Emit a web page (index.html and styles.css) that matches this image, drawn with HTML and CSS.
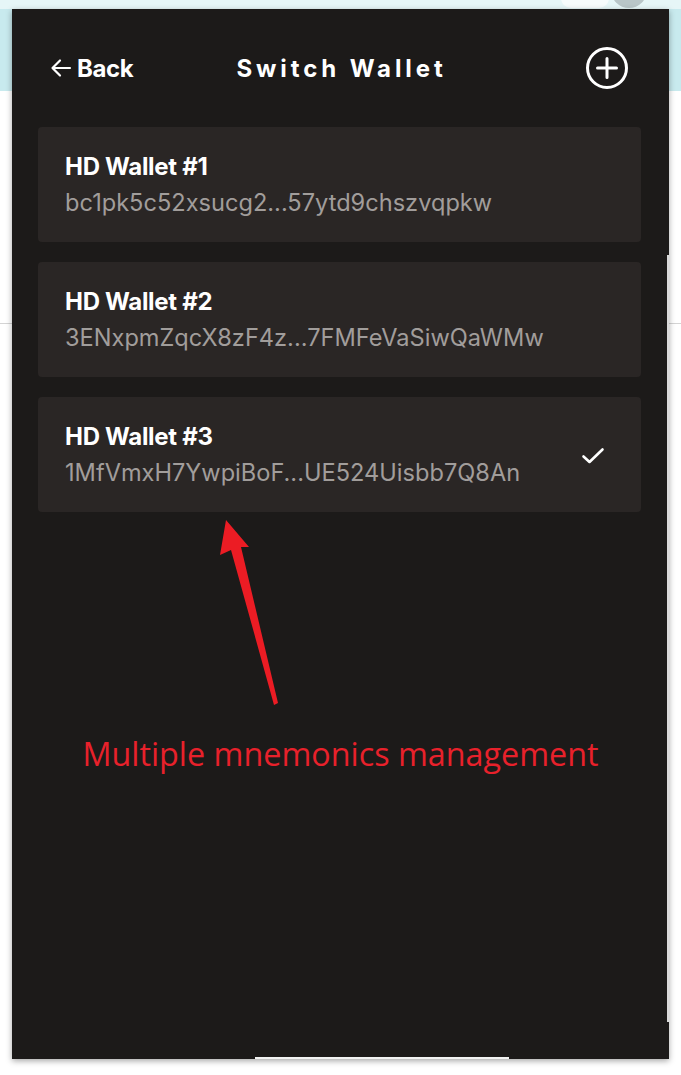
FILE: index.html
```html
<!DOCTYPE html>
<html lang="en">
<head>
<meta charset="utf-8">
<title>Switch Wallet</title>
<link rel="stylesheet" href="styles.css">
</head>
<body>
<div class="topdeco"><span class="pill"></span><span class="dot"></span></div>
<main class="panel">
  <header class="header">
    <a class="back" href="#">
      <svg class="back-icon" viewBox="0 0 22 20" width="22" height="20" aria-hidden="true">
        <path d="M20 10H3M10 2.5L2.5 10L10 17.5" fill="none" stroke="#fff" stroke-width="2.2" stroke-linecap="round" stroke-linejoin="round"/>
      </svg>
      <span>Back</span>
    </a>
    <h1 class="title">Switch Wallet</h1>
    <div class="add">
      <svg viewBox="0 0 44 44" width="44" height="44" aria-hidden="true">
        <circle cx="22" cy="22" r="19.5" fill="none" stroke="#fff" stroke-width="3"/>
        <path d="M22 12.5V31.5M12.5 22H31.5" stroke="#fff" stroke-width="3" stroke-linecap="round"/>
      </svg>
    </div>
  </header>

  <section class="list">
    <div class="card">
      <div class="card-text">
        <div class="name">HD Wallet #1</div>
        <div class="addr">bc1pk5c52xsucg2...57ytd9chszvqpkw</div>
      </div>
    </div>
    <div class="card">
      <div class="card-text">
        <div class="name">HD Wallet #2</div>
        <div class="addr">3ENxpmZqcX8zF4z...7FMFeVaSiwQaWMw</div>
      </div>
    </div>
    <div class="card">
      <div class="card-text">
        <div class="name">HD Wallet #3</div>
        <div class="addr">1MfVmxH7YwpiBoF...UE524Uisbb7Q8An</div>
      </div>
      <svg class="check" viewBox="0 0 24 18" width="24" height="18" aria-hidden="true">
        <path d="M2.5 9.5L8.5 15L21.5 2.5" fill="none" stroke="#fff" stroke-width="2.6" stroke-linecap="round" stroke-linejoin="round"/>
      </svg>
    </div>
  </section>

  <p class="note">Multiple mnemonics management</p>

  <svg class="arrow" viewBox="12 9 657 1050" width="657" height="1050" aria-hidden="true">
    <polygon points="226,520 249,547 241,547 278,703 274,705 231,550 220,555" fill="#ec1c24"/>
  </svg>
  <div class="scrollbar"></div>
</main>
</body>
</html>
```
FILE: styles.css
```css
* { box-sizing: border-box; }

html, body { margin: 0; padding: 0; }

body {
  width: 681px;
  height: 1075px;
  overflow: hidden;
  position: relative;
  padding: 9px 12px 0 12px;
  font-family: Inter, "Liberation Sans", sans-serif;
  background:
    linear-gradient(to bottom,
      #e6f6f7 0, #e6f6f7 9px,
      #c8eaee 9px, #c8eaee 91px,
      #ffffff 91px, #ffffff 323px,
      #d4d4d4 323px, #d4d4d4 324px,
      #ffffff 324px);
}

.topdeco {
  position: absolute;
  top: 0;
  right: 0;
  height: 9px;
  width: 120px;
}
.pill {
  position: absolute;
  left: 0;
  top: -12px;
  width: 48px;
  height: 20px;
  border-radius: 10px;
  background: #f7fcfc;
}
.dot {
  position: absolute;
  left: 50px;
  top: -28px;
  width: 36px;
  height: 36px;
  border-radius: 50%;
  background: #b9c6c8;
}

.panel {
  position: relative;
  width: 657px;
  height: 1050px;
  background: #1c1a19;
  box-shadow: 0 2px 6px rgba(0, 0, 0, 0.35);
  display: flex;
  flex-direction: column;
}
.panel::after {
  content: "";
  position: absolute;
  left: 243px;
  bottom: 0;
  width: 254px;
  height: 2px;
  background: #f2f2f2;
}

.header {
  height: 118px;
  padding: 0 40px 0 38px;
  display: grid;
  grid-template-columns: 1fr auto 1fr;
  align-items: center;
}

.back {
  justify-self: start;
  display: flex;
  align-items: center;
  gap: 5px;
  color: #fff;
  text-decoration: none;
  font-weight: 700;
  font-size: 24px;
  letter-spacing: -0.4px;
}
.back-icon { display: block; }

.title {
  margin: 0 0 0 4px;
  color: #fff;
  font-size: 24px;
  font-weight: 700;
  letter-spacing: 3.9px;
}

.add {
  justify-self: end;
  display: flex;
}
.add svg { display: block; }

.list {
  display: flex;
  flex-direction: column;
  gap: 20px;
  padding: 0 28px 0 26px;
}

.card {
  height: 115px;
  background: #2a2625;
  border-radius: 4px;
  padding: 22px 36px 0 27px;
  display: flex;
  justify-content: space-between;
  align-items: flex-start;
}

.name {
  color: #fff;
  font-weight: 700;
  font-size: 24px;
  line-height: 36px;
  letter-spacing: -0.3px;
}
.addr {
  color: #a19d9b;
  font-size: 23.6px;
  line-height: 36px;
}

.check {
  display: block;
  margin-top: 28px;
}

.note {
  margin: 221px 0 0 0;
  text-align: center;
  color: #e8212b;
  font-family: "Open Sans", "Noto Sans", sans-serif;
  font-size: 32.3px;
  line-height: 40px;
}

.arrow {
  position: absolute;
  left: 0;
  top: 0;
  pointer-events: none;
}

.scrollbar {
  position: absolute;
  right: 0;
  top: 246px;
  width: 2px;
  height: 767px;
  background: #d9d9d9;
}
```
